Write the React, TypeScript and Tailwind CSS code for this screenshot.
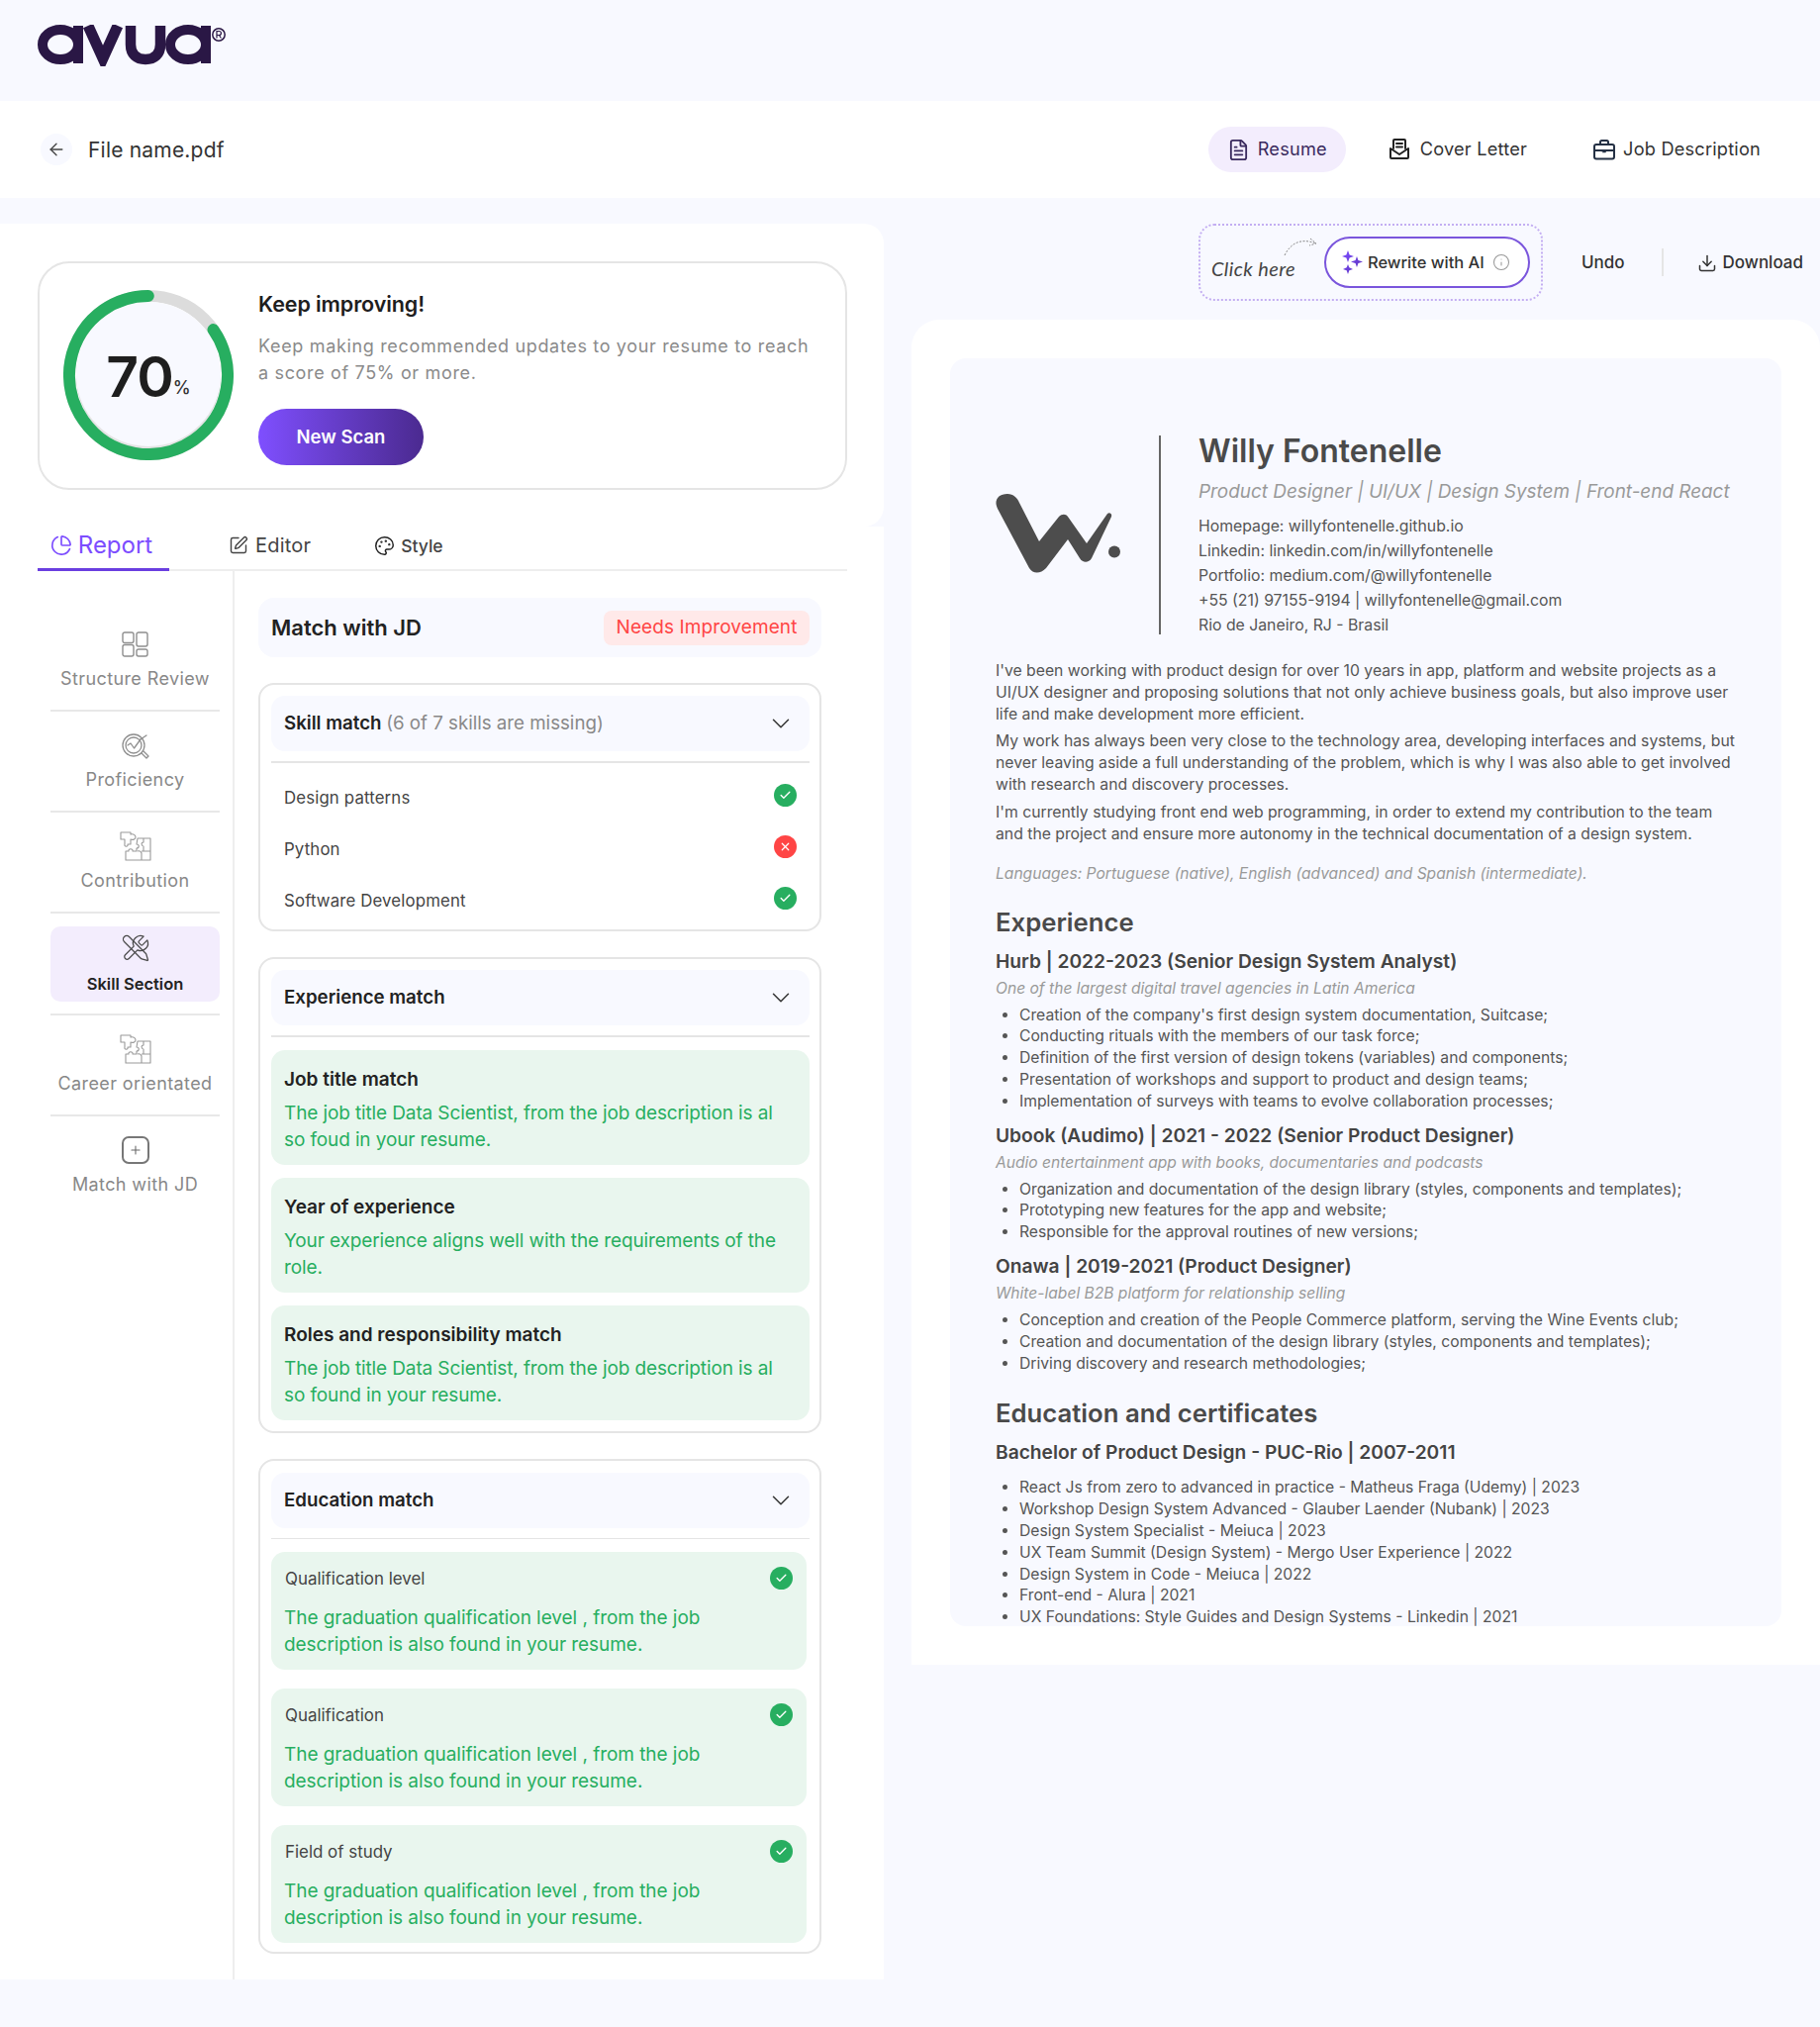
import React from "react";
import { ArrowLeft, FileText, ChevronDown, SquarePen, Palette, ChartPie, Download, Info, Check, X, Plus } from "lucide-react";

const Logo = () => (
  <svg width="192" height="42" viewBox="0 0 192 42" fill="none">
    <g stroke="#2a1745" strokeWidth="10">
      <ellipse cx="23" cy="20" rx="18" ry="15" />
      <path d="M41 1v38" />
      <path d="M51 1l15 33 15-33" strokeWidth="11" />
      <path d="M94 1v19c0 10 6 15 15 15s15-5 15-15V1" strokeWidth="10.5" />
      <ellipse cx="152" cy="20" rx="18" ry="15" />
      <path d="M170 1v38" />
    </g>
    <circle cx="183" cy="10" r="6.2" stroke="#2a1745" strokeWidth="1.5" />
    <path d="M181 13.5v-7h2.4a2 2 0 0 1 0 4H181m2.4 0l2 3" stroke="#2a1745" strokeWidth="1.2" />
  </svg>
);

const CoverIcon = () => (
  <svg width="24" height="24" viewBox="0 0 24 24" fill="none" stroke="#222" strokeWidth="2" strokeLinecap="round" strokeLinejoin="round">
    <path d="M6 11V3a1 1 0 0 1 1-1h10a1 1 0 0 1 1 1v8" />
    <path d="M9 6h6M9 9.5h6" />
    <path d="M3 11v9a1 1 0 0 0 1 1h16a1 1 0 0 0 1-1v-9l-9 6z" />
  </svg>
);

const CaseIcon = () => (
  <svg width="24" height="24" viewBox="0 0 24 24" fill="none" stroke="#243044" strokeWidth="2" strokeLinejoin="round" strokeLinecap="round">
    <rect x="2" y="7" width="20" height="14.5" rx="2" />
    <path d="M8 7V4.5A1.5 1.5 0 0 1 9.5 3h5A1.5 1.5 0 0 1 16 4.5V7" />
    <path d="M2 13h20" />
    <rect x="10.5" y="12.5" width="3" height="2.5" fill="#243044" strokeWidth="0.5" />
  </svg>
);

const Structure = () => (
  <svg width="27" height="26" viewBox="0 0 27 26" fill="none" stroke="#8f8f8f" strokeWidth="1.4">
    <rect x="1" y="1" width="11" height="10.5" rx="2" />
    <rect x="15" y="1" width="11" height="14" rx="2" />
    <rect x="1" y="13.5" width="11" height="11.5" rx="2" />
    <rect x="15" y="18" width="11" height="7" rx="2" />
  </svg>
);

const Prof = () => (
  <svg width="28" height="27" viewBox="0 0 28 27" fill="none" stroke="#8f8f8f" strokeWidth="1.3" strokeLinecap="round" strokeLinejoin="round">
    <circle cx="12" cy="13" r="11" />
    <circle cx="12" cy="13" r="8" />
    <path d="M6 13l3-2 3.5 5L19 7" />
    <path d="M19 7l6-4" />
    <path d="M20 21l5 5 2-2-5-5" />
  </svg>
);

const PuzzleIcon = () => (
  <svg width="32" height="30" viewBox="0 0 32 30" fill="none" stroke="#9a9a9a" strokeWidth="1.1" strokeLinejoin="round">
    <path d="M1 1h10v2c3-1 5 1 5 3s-3 3-5 2v5H8c1 3-4 3-3 0V8H1z" />
    <path d="M18 7h13v22H6V20h3c-1-3 5-3 4 0h4v-3c3 0 3-4 0-4l1-6z" />
    <path d="M18 20c3-1 4 2 4 2v7M22 20h9M24 7v4c-3 0-2 4 0 4v5" />
  </svg>
);

const Tools = () => (
  <svg width="30" height="30" viewBox="0 0 24 24" fill="none" stroke="#4a4a4a" strokeWidth="1" strokeLinejoin="round" strokeLinecap="round">
    <path d="M14.7 6.3a1 1 0 0 0 0 1.4l1.6 1.6a1 1 0 0 0 1.4 0l3.77-3.77a6 6 0 0 1-7.94 7.94l-6.91 6.91a2.12 2.12 0 0 1-3-3l6.91-6.91a6 6 0 0 1 7.94-7.94l-3.76 3.76z" />
    <path transform="translate(24 0) scale(-1 1)" d="M21.174 6.812a1 1 0 0 0-3.986-3.987L3.842 16.174a2 2 0 0 0-.5.83l-1.321 4.352a.5.5 0 0 0 .623.622l4.353-1.32a2 2 0 0 0 .83-.497z" />
  </svg>
);

const PlusBox = () => (
  <div className="flex h-[28px] w-[28px] items-center justify-center rounded-[7px] border-2 border-[#777]">
    <Plus size={14} color="#666" strokeWidth={1.8} />
  </div>
);

const Ok = () => (
  <div className="flex h-[23px] w-[23px] shrink-0 items-center justify-center rounded-full bg-[#27ae60]">
    <Check size={13} color="#fff" strokeWidth={2.5} />
  </div>
);
const Bad = () => (
  <div className="flex h-[23px] w-[23px] shrink-0 items-center justify-center rounded-full bg-[#ff4545]">
    <X size={13} color="#fff" strokeWidth={2.2} />
  </div>
);

const Sparkle = () => (
  <svg width="21" height="24" viewBox="0 0 21 24">
    <defs>
      <linearGradient id="sp" x1="0" y1="0" x2="1" y2="1">
        <stop offset="0" stopColor="#7c4dff" />
        <stop offset="1" stopColor="#5a32b8" />
      </linearGradient>
    </defs>
    <path fill="url(#sp)" d="M6 0l1.6 4.4L12 6 7.6 7.6 6 12 4.4 7.6 0 6l4.4-1.6zM15 6l1.4 4.1 4.6 1.4-4.6 1.4L15 17l-1.4-4.1L9 11.5l4.6-1.4zM6 14l1.3 3.2L11 19l-3.7 1.3L6 24l-1.3-3.7L1 19l3.7-1.8z" />
  </svg>
);

const side = [
  { label: "Structure Review", icon: <Structure /> },
  { label: "Proficiency", icon: <Prof /> },
  { label: "Contribution", icon: <PuzzleIcon /> },
];

const SideItem = ({ label, icon, last }: { label: string; icon: React.ReactNode; last?: boolean }) => (
  <div className={`flex h-[102px] flex-col items-center pt-[19px] ${last ? "" : "border-b-2 border-[#e8e8e8]"}`}>
    <div className="flex h-[30px] items-center justify-center">{icon}</div>
    <div className="mt-[5px] text-[18px] leading-[30px] tracking-[0.4px] text-[#888]">{label}</div>
  </div>
);

const Head = ({ children }: { children: React.ReactNode }) => (
  <div className="flex h-[56px] items-center justify-between rounded-[14px] bg-[#f8f9ff] pl-[13px] pr-[14px]">
    <div className="text-[18.7px] font-semibold text-[#222]">{children}</div>
    <ChevronDown size={30} color="#333" strokeWidth={1.2} />
  </div>
);

const Green = ({ title, a, b }: { title: string; a: string; b: string }) => (
  <div className="h-[116px] rounded-[14px] bg-[#e9f6ee] pl-[13px] pr-[8px] pt-[16px]">
    <div className="text-[19px] font-semibold leading-[28px] text-[#222]">{title}</div>
    <div className="mt-[6px] whitespace-nowrap text-[19px] leading-[27px] tracking-[-0.12px] text-[#27ae60]">
      <div>{a}</div>
      <div>{b}</div>
    </div>
  </div>
);

const Edu = ({ title }: { title: string }) => (
  <div className="h-[119px] w-[541px] rounded-[14px] bg-[#e9f6ee] pl-[13px] pr-[14px] pt-[14px]">
    <div className="flex items-center justify-between">
      <div className="mt-[1px] pl-[1px] text-[16.9px] leading-[24px] text-[#444]">{title}</div>
      <Ok />
    </div>
    <div className="mt-[13.5px] whitespace-nowrap text-[19px] leading-[27px] tracking-[-0.05px] text-[#27ae60]">
      <div>The graduation qualification level , from the job</div>
      <div>description is also found in your resume.</div>
    </div>
  </div>
);

const Job = ({ title, sub, items }: { title: string; sub: string; items: string[] }) => (
  <>
    <h3 className="mt-[11px] text-[19.2px] font-semibold leading-[24px] text-[#444]">{title}</h3>
    <p className="mt-[5px] text-[15.6px] italic leading-[22px] text-[#999]">{sub}</p>
    <Bullets items={items} />
  </>
);

const Bullets = ({ items, mt = "mt-[5px]" }: { items: string[]; mt?: string }) => (
  <ul className={`${mt} list-disc pl-[24px] text-[15.7px] leading-[21.8px] text-[#555]`}>
    {items.map((t) => (
      <li key={t}>{t}</li>
    ))}
  </ul>
);

export default function App() {
  return (
    <div className="h-[2048px] w-[1839px] overflow-hidden bg-[#f8f9ff] font-['Inter',sans-serif] text-[#222]">
      <header className="h-[102px] pl-[38px] pt-[25px]">
        <Logo />
      </header>

      <nav className="flex h-[98px] items-center justify-between bg-white pl-[41px] pr-[60px]">
        <div className="flex items-center gap-[16px]">
          <div className="flex h-[32px] w-[32px] items-center justify-center rounded-full bg-[#f8f9ff]">
            <ArrowLeft size={20} color="#444" strokeWidth={1.6} />
          </div>
          <span className="mt-[1px] text-[21px] tracking-[0.2px] text-[#333]">File name.pdf</span>
        </div>
        <div className="flex items-center">
          <div className="flex h-[46px] w-[139px] items-center justify-center gap-[8px] rounded-full bg-[#f3edfd] text-[#3a2a5e]">
            <FileText size={23} strokeWidth={1.9} />
            <span className="text-[18.2px] tracking-[0.2px]">Resume</span>
          </div>
          <div className="ml-[42px] flex items-center gap-[9px]">
            <CoverIcon />
            <span className="text-[18.2px] tracking-[0.2px] text-[#333]">Cover Letter</span>
          </div>
          <div className="ml-[66px] flex items-center gap-[7px]">
            <CaseIcon />
            <span className="text-[18.2px] tracking-[0.2px] text-[#333]">Job Description</span>
          </div>
        </div>
      </nav>

      <main className="flex gap-[28px] pt-[26px]">
        <section className="w-[893px]">
          <div className="h-[306px] rounded-r-[20px] bg-white pl-[38px] pr-[37px] pt-[38px]">
            <div className="flex h-[231px] rounded-[32px] border-2 border-[#e5e5e5] pl-[24px] pt-[27px]">
              <div className="relative h-[172px] w-[172px] shrink-0">
                <svg width="172" height="172" viewBox="0 0 172 172" fill="none">
                  <circle cx="86" cy="86" r="80" stroke="#dcdcdc" strokeWidth="12" />
                  <circle cx="86" cy="88" r="73" fill="#e4e4e4" />
                  <circle cx="86" cy="85" r="73" fill="#f8f9ff" />
                  <circle
                    cx="86"
                    cy="86"
                    r="80"
                    stroke="#27ae60"
                    strokeWidth="12"
                    strokeLinecap="round"
                    strokeDasharray="425 503"
                    transform="rotate(-35 86 86)"
                  />
                </svg>
                <div className="absolute inset-0 flex items-center justify-center pt-[2px]">
                  <span className="text-[57px] font-semibold leading-none tracking-[-1px] text-[#1e1e1e]">70</span>
                  <span className="mt-[22px] text-[18px] font-medium text-[#333]">%</span>
                </div>
              </div>
              <div className="ml-[25px]">
                <div className="pt-[1px] text-[21.5px] font-semibold leading-[27px] tracking-[-0.1px] text-[#1e1e1e]">Keep improving!</div>
                <p className="mt-[16px] text-[18px] leading-[26.5px] tracking-[0.66px] text-[#8a8a8a]">
                  Keep making recommended updates to your resume to reach
                  <br />a score of 75% or more.
                </p>
                <button className="mt-[23px] h-[57px] w-[167px] rounded-full bg-gradient-to-r from-[#7f4fff] to-[#4b2a90] text-[18.5px] font-semibold text-white">
                  New Scan
                </button>
              </div>
            </div>
          </div>

          <div className="h-[1468px] bg-white pl-[38px]">
            <div className="flex h-[45px] w-[818px] items-end border-b-2 border-[#eeeeee]">
              <div className="-mb-[2px] flex h-[45px] w-[133px] items-start justify-center gap-[6px] border-b-[3px] border-[#6a3ee0] pr-[4px] pt-[6px]">
                <ChartPie size={22} color="#7c4dff" strokeWidth={1.8} className="mt-[2px]" />
                <span className="text-[24px] leading-[26px] text-[#7c4dff]">Report</span>
              </div>
              <div className="ml-[60px] flex h-[43px] items-start gap-[7px] pt-[7px]">
                <SquarePen size={20} color="#444" strokeWidth={1.7} className="mt-[2px]" />
                <span className="text-[20px] leading-[25px] tracking-[0.2px] text-[#444]">Editor</span>
              </div>
              <div className="ml-[64px] flex h-[43px] items-start gap-[6px] pt-[7px]">
                <Palette size={21} color="#222" strokeWidth={1.7} className="mt-[2px]" />
                <span className="text-[17.5px] font-medium leading-[25px] text-[#444]">Style</span>
              </div>
            </div>

            <div className="flex">
              <aside className="h-[1423px] w-[199px] border-r-2 border-[#eeeeee] pl-[13px] pr-[13px] pt-[40px]">
                {side.map((s) => (
                  <SideItem key={s.label} label={s.label} icon={s.icon} />
                ))}
                <div className="mt-[13px] flex h-[76px] flex-col items-center rounded-[10px] bg-[#f3edfd] pt-[7px]">
                  <Tools />
                  <div className="mt-[8px] text-[16.5px] font-semibold leading-[26px] text-[#222]">Skill Section</div>
                </div>
                <div className="mt-[12px] border-t-2 border-[#e8e8e8]" />
                <SideItem label="Career orientated" icon={<PuzzleIcon />} />
                <SideItem label="Match with JD" icon={<PlusBox />} last />
              </aside>

              <div className="w-[593px] pl-[24px] pt-[27px]">
                <div className="flex h-[60px] w-[569px] items-center justify-between rounded-[16px] bg-[#f8f9ff] pl-[13px] pr-[12px]">
                  <div className="text-[22px] font-semibold text-[#222]">Match with JD</div>
                  <div className="flex h-[35px] w-[208px] items-center justify-center rounded-[8px] bg-[#ffe9e9] text-[19px] tracking-[0.1px] text-[#ff4545]">
                    Needs Improvement
                  </div>
                </div>

                <div className="mt-[26px] h-[251px] w-[569px] rounded-[16px] border-2 border-[#e5e5e5] pl-[11px] pr-[10px] pt-[11px]">
                  <Head>
                    Skill match <span className="font-normal text-[#888]">(6 of 7 skills are missing)</span>
                  </Head>
                  <div className="mt-[10px] border-b-2 border-[#e5e5e5]" />
                  <div className="pt-[6px]">
                    {[
                      ["Design patterns", true],
                      ["Python", false],
                      ["Software Development", true],
                    ].map(([t, ok]) => (
                      <div key={t as string} className="flex h-[52px] items-center justify-between pl-[13px] pr-[13px] text-[16.8px] tracking-[0.15px] text-[#444]">
                        <span className="pt-[7px]">{t as string}</span>
                        {ok ? <Ok /> : <Bad />}
                      </div>
                    ))}
                  </div>
                </div>

                <div className="mt-[26px] h-[481px] w-[569px] rounded-[16px] border-2 border-[#e5e5e5] pl-[11px] pr-[10px] pt-[11px]">
                  <Head>Experience match</Head>
                  <div className="mt-[10px] border-b-2 border-[#e5e5e5]" />
                  <div className="mt-[13px] flex flex-col gap-[13px]">
                    <Green title="Job title match" a="The job title Data Scientist, from the job description is al" b="so foud in your resume." />
                    <Green title="Year of experience" a="Your experience aligns well with the requirements of the" b="role." />
                    <Green title="Roles and responsibility match" a="The job title Data Scientist, from the job description is al" b="so found in your resume." />
                  </div>
                </div>

                <div className="mt-[26px] h-[500px] w-[569px] rounded-[16px] border-2 border-[#e5e5e5] pl-[11px] pr-[10px] pt-[12px]">
                  <Head>Education match</Head>
                  <div className="mt-[10px] border-b-[1.5px] border-[#e5e5e5]" />
                  <div className="mt-[13px] flex flex-col gap-[19px]">
                    <Edu title="Qualification level" />
                    <Edu title="Qualification" />
                    <Edu title="Field of study" />
                  </div>
                </div>
              </div>
            </div>
          </div>
        </section>

        <section className="w-[918px] font-['Inter',sans-serif]">
          <div className="flex h-[78px] items-center justify-end pr-[17px] text-[#333]">
            <div className="flex h-[78px] w-[348px] items-center rounded-[16px] border-2 border-dotted border-[#c3aef2] pl-[11px]">
              <div className="relative w-[114px] pt-[12px]">
                <span className="text-[20px] italic tracking-[0.4px] text-[#444] font-['Lato',sans-serif]">Click here</span>
                <svg className="absolute left-[72px] top-[-8px]" width="36" height="24" viewBox="0 0 36 24" fill="none" stroke="#888" strokeWidth="1" strokeDasharray="2 1.5">
                  <path d="M2 22C8 10 18 4 34 10" />
                  <path d="M28 5l6 5-7 2" />
                </svg>
              </div>
              <div className="flex h-[52px] w-[208px] items-center rounded-full border-2 border-[#7a55dc] bg-white pl-[16px]">
                <Sparkle />
                <span className="ml-[5px] text-[16.5px] font-medium text-[#333]">Rewrite with AI</span>
                <Info size={18} color="#999" strokeWidth={1.4} className="ml-[8px]" />
              </div>
            </div>
            <span className="mt-[1px] ml-[39px] text-[17px] font-medium">Undo</span>
            <div className="ml-[37px] h-[28px] w-[2px] bg-[#e5e5e5]" />
            <div className="ml-[34px] mt-[1px] flex items-center gap-[6px]">
              <Download size={20} color="#333" strokeWidth={1.8} />
              <span className="text-[17px] font-medium">Download</span>
            </div>
          </div>

          <div className="mt-[19px] h-[1359px] rounded-t-[28px] bg-white p-[39px]">
            <div className="h-[1281px] overflow-hidden rounded-[16px] bg-[#f8f9ff] pl-[46px] pr-[30px] pt-[78px]">
              <div className="flex h-[201px]">
                <div className="w-[167px] shrink-0 border-r-2 border-[#666]">
                  <svg className="-ml-[6px] mt-[50px]" width="140" height="100" viewBox="0 0 140 100">
                    <path
                      fill="#4d4d4d"
                      d="M8 24C4 16 8 9 18 9c6 0 10 4 12 9l20 39 20-25c3-3 7-3 9 0l19 27 21-30c2-2 5 0 4 3l-20 42c-3 5-9 5-12 0L79 55 57 84c-6 6-13 6-17 0z"
                    />
                    <circle cx="126" cy="67.5" r="6" fill="#4d4d4d" />
                  </svg>
                </div>
                <div className="pl-[38px]">
                  <h1 className="text-[32px] font-semibold leading-[32px] text-[#4a4a4a]">Willy Fontenelle</h1>
                  <p className="mt-[13px] whitespace-nowrap text-[18.9px] italic leading-[24px] text-[#999]">Product Designer | UI/UX | Design System | Front-end React</p>
                  <div className="mt-[10px] text-[15.8px] leading-[25px] text-[#555]">
                    <div>Homepage: willyfontenelle.github.io</div>
                    <div>Linkedin: linkedin.com/in/willyfontenelle</div>
                    <div>Portfolio: medium.com/@willyfontenelle</div>
                    <div>+55 (21) 97155-9194 | willyfontenelle@gmail.com</div>
                    <div>Rio de Janeiro, RJ - Brasil</div>
                  </div>
                </div>
              </div>

              <div className="mt-[26px] text-[15.75px] leading-[21.8px] text-[#555]">
                <p>
                  I've been working with product design for over 10 years in app, platform and website projects as a
                  <br />
                  UI/UX designer and proposing solutions that not only achieve business goals, but also improve user
                  <br />
                  life and make development more efficient.
                </p>
                <p className="mt-[6px]">
                  My work has always been very close to the technology area, developing interfaces and systems, but
                  <br />
                  never leaving aside a full understanding of the problem, which is why I was also able to get involved
                  <br />
                  with research and discovery processes.
                </p>
                <p className="mt-[6px]">
                  I'm currently studying front end web programming, in order to extend my contribution to the team
                  <br />
                  and the project and ensure more autonomy in the technical documentation of a design system.
                </p>
                <p className="mt-[18.5px] text-[15.6px] italic text-[#999]">Languages: Portuguese (native), English (advanced) and Spanish (intermediate).</p>
              </div>

              <h2 className="mt-[22px] text-[25.7px] font-semibold leading-[32px] text-[#4a4a4a]">Experience</h2>
              <Job
                title="Hurb | 2022-2023 (Senior Design System Analyst)"
                sub="One of the largest digital travel agencies in Latin America"
                items={[
                  "Creation of the company's first design system documentation, Suitcase;",
                  "Conducting rituals with the members of our task force;",
                  "Definition of the first version of design tokens (variables) and components;",
                  "Presentation of workshops and support to product and design teams;",
                  "Implementation of surveys with teams to evolve collaboration processes;",
                ]}
              />
              <Job
                title="Ubook (Audimo) | 2021 - 2022 (Senior Product Designer)"
                sub="Audio entertainment app with books, documentaries and podcasts"
                items={[
                  "Organization and documentation of the design library (styles, components and templates);",
                  "Prototyping new features for the app and website;",
                  "Responsible for the approval routines of new versions;",
                ]}
              />
              <Job
                title="Onawa | 2019-2021 (Product Designer)"
                sub="White-label B2B platform for relationship selling"
                items={[
                  "Conception and creation of the People Commerce platform, serving the Wine Events club;",
                  "Creation and documentation of the design library (styles, components and templates);",
                  "Driving discovery and research methodologies;",
                ]}
              />

              <h2 className="mt-[24px] text-[25.7px] font-semibold leading-[32px] text-[#4a4a4a]">Education and certificates</h2>
              <h3 className="mt-[11px] text-[19.2px] font-semibold leading-[24px] text-[#444]">Bachelor of Product Design - PUC-Rio | 2007-2011</h3>
              <Bullets
                mt="mt-[13px]"
                items={[
                  "React Js from zero to advanced in practice - Matheus Fraga (Udemy) | 2023",
                  "Workshop Design System Advanced - Glauber Laender (Nubank) | 2023",
                  "Design System Specialist - Meiuca | 2023",
                  "UX Team Summit (Design System) - Mergo User Experience | 2022",
                  "Design System in Code - Meiuca | 2022",
                  "Front-end - Alura | 2021",
                  "UX Foundations: Style Guides and Design Systems - Linkedin | 2021",
                ]}
              />
            </div>
          </div>
        </section>
      </main>
    </div>
  );
}
